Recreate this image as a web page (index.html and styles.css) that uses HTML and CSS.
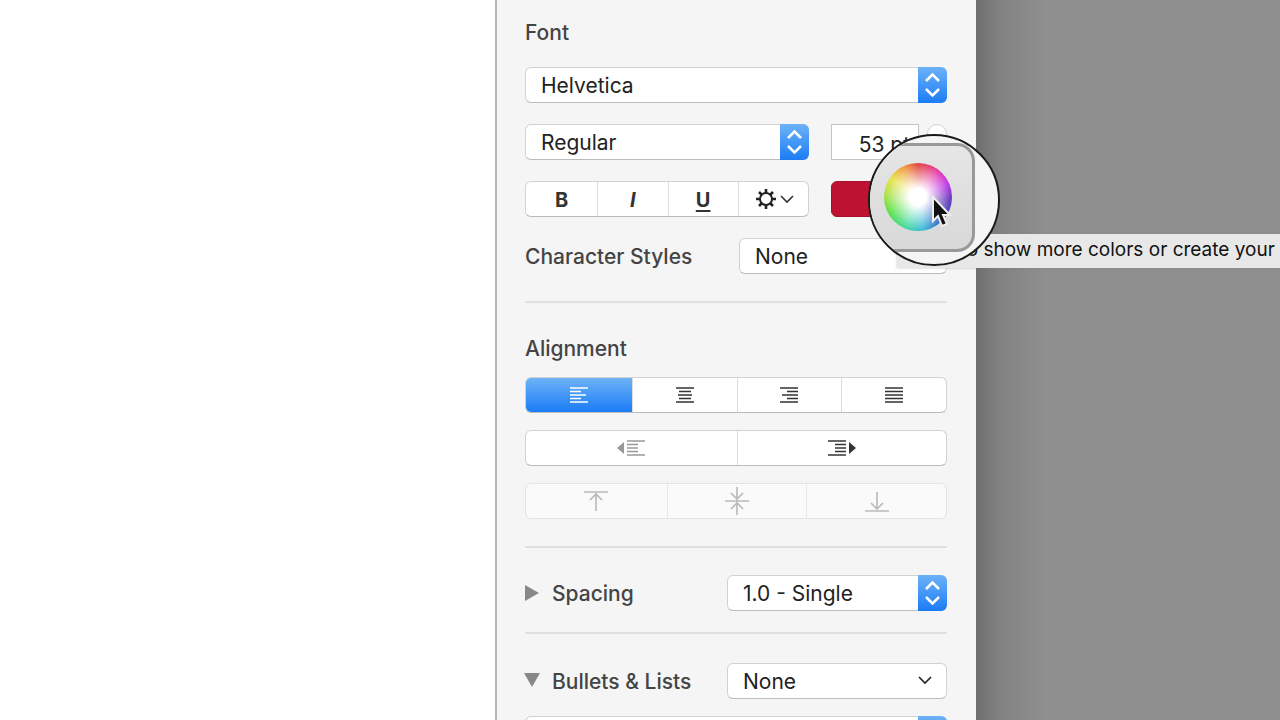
FILE: index.html
```
<!DOCTYPE html>
<html lang="en">
<head>
  <meta charset="UTF-8">
  <meta name="viewport" content="width=device-width, initial-scale=1">
  <title>Text Format</title>
  <link rel="stylesheet" href="styles.css">
</head>
<body>
  <!-- shared icons -->
  <svg class="sprite" aria-hidden="true">
    <symbol id="updown" viewBox="0 0 29 36">
      <path d="M8 14l6.500-6.500L21 14M8 22l6.500 6.500L21 22" fill="none" stroke="#fff" stroke-width="2.500"/>
    </symbol>
    <symbol id="chevron" viewBox="0 0 14 10">
      <path d="M1 2l6 6 6-6" fill="none" stroke="currentColor" stroke-width="1.600"/>
    </symbol>
  </svg>

  <div class="canvas"></div>
  <aside class="panel">
    <section class="font">
      <h2>Font</h2>
      <div class="rows">
        <div class="select">
          <select aria-label="Font family"><option>Helvetica</option></select>
          <svg class="cap"><use href="#updown"/></svg>
        </div>
        <div class="row">
          <div class="select half">
            <select aria-label="Typeface"><option>Regular</option></select>
            <svg class="cap"><use href="#updown"/></svg>
          </div>
          <input class="size" type="text" value="53 pt" aria-label="Font size">
          <button class="stepper" aria-label="Change size"></button>
        </div>
        <div class="row">
          <div class="segments half">
            <button class="bold">B</button>
            <button class="italic">I</button>
            <button class="underline">U</button>
            <button class="gear" aria-label="Advanced options">
              <svg width="20" height="20" viewBox="-10 -10 20 20">
                <g stroke="#222" stroke-width="2.600">
                  <path d="M0-10v4M0 6v4M-10 0h4M6 0h4M-7-7l3 3M4 4l3 3M-7 7l3-3M4-4l3-3"/>
                  <circle r="6" fill="none" stroke-width="2"/>
                </g>
              </svg>
              <svg width="14" height="10"><use href="#chevron"/></svg>
            </button>
          </div>
          <div class="color">
            <button class="well" aria-label="Text color"></button>
            <div class="tooltip">Click to show more colors or create your</div>
            <div class="lens">
              <div class="wheel-button"></div>
              <div class="wheel"></div>
              <svg class="cursor" viewBox="0 0 22 36">
                <path d="M2 2v24l5-5 4 10 5-2-4-9h7z" fill="#111" stroke="#eee" stroke-width="2"/>
              </svg>
            </div>
          </div>
        </div>
        <div class="row">
          <label for="charStyle">Character Styles</label>
          <div class="select menu char-style">
            <select id="charStyle"><option>None</option></select>
            <svg class="arrow"><use href="#chevron"/></svg>
          </div>
        </div>
      </div>
    </section>

    <section class="alignment">
      <h2>Alignment</h2>
      <div class="stack">
        <div class="segments">
          <button class="active" aria-label="Align left">
            <svg width="18" height="18"><path d="M0 2h18M0 5.500h11M0 9h16M0 12.500h11M0 16h18"/></svg>
          </button>
          <button aria-label="Align center">
            <svg width="18" height="18"><path d="M0 2h18M3 5.500h12M2 9h14M3 12.500h12M0 16h18"/></svg>
          </button>
          <button aria-label="Align right">
            <svg width="18" height="18"><path d="M0 2h18M7 5.500h11M2 9h16M7 12.500h11M0 16h18"/></svg>
          </button>
          <button aria-label="Justify">
            <svg width="18" height="18"><path d="M0 2h18M0 5.500h18M0 9h18M0 12.500h18M0 16h18"/></svg>
          </button>
        </div>
        <div class="segments">
          <button class="dim" aria-label="Decrease indent">
            <svg width="28" height="18"><path d="M10 2h18M10 5.500h11M10 9h11M10 12.500h11M10 16h18"/><path class="solid" d="M7 3v12L0 9z"/></svg>
          </button>
          <button aria-label="Increase indent">
            <svg width="28" height="18"><path d="M0 2h18M7 5.500h11M7 9h11M7 12.500h11M0 16h18"/><path class="solid" d="M21 3v12l7-6z"/></svg>
          </button>
        </div>
        <div class="segments disabled">
          <button disabled aria-label="Align top">
            <svg width="24" height="28"><path d="M0 5h24M12 24V6M6 13l6-6 6 6"/></svg>
          </button>
          <button disabled aria-label="Align middle">
            <svg width="24" height="28"><path d="M0 14h24M12 0v28M6 6l6 6 6-6M6 22l6-6 6 6"/></svg>
          </button>
          <button disabled aria-label="Align bottom">
            <svg width="24" height="28"><path d="M0 24h24M12 5v18M6 16l6 6 6-6"/></svg>
          </button>
        </div>
      </div>
    </section>

    <section class="spacing row">
      <svg class="disclosure" viewBox="0 0 16 16"><path d="M0 0v16l14-8z"/></svg>
      <label for="spacing">Spacing</label>
      <div class="select value">
        <select id="spacing"><option>1.0 - Single</option></select>
        <svg class="cap"><use href="#updown"/></svg>
      </div>
    </section>

    <section class="bullets">
      <div class="row">
        <svg class="disclosure" viewBox="0 0 16 16"><path d="M-1 0h16L7 14z"/></svg>
        <label for="bullets">Bullets &amp; Lists</label>
        <div class="select menu value">
          <select id="bullets"><option>None</option></select>
          <svg class="arrow"><use href="#chevron"/></svg>
        </div>
      </div>
      <div class="select">
        <select aria-label="Bullet type"></select>
        <svg class="cap"><use href="#updown"/></svg>
      </div>
    </section>
  </aside>
  <div class="desktop"></div>
</body>
</html>
```
FILE: styles.css
```
:root {
  --panel: #f5f5f5;
  --edge: #d2d2d2;
  --label: #444;
  --blue: linear-gradient(#6db2f7, #1b7cf6);
}
* { box-sizing: border-box; margin: 0; padding: 0; }
body {
  display: flex;
  height: 100vh;
  overflow: hidden;
  background: #fff;
  color: #222;
  font: 21px/24px Inter, "Liberation Sans", sans-serif;
}
button, input, select { font: inherit; color: inherit; }
.sprite { position: absolute; width: 0; height: 0; }
.canvas { flex: 495 1 0; }
.desktop {
  flex: 304 1 0;
  background: linear-gradient(to right, #6e6e6e, #828282 24px, #8f8f8f 70px);
}
.panel {
  position: relative;
  z-index: 1;
  flex: 0 0 481px;
  padding: 0 29px 0 28px;
  background: var(--panel);
  border-left: 2px solid #b6b6b6;
}
h2, label {
  color: var(--label);
  font-size: 21px;
  font-weight: 500;
  line-height: 24px;
}
label { padding-top: 2px; }
section { border-bottom: 2px solid #e0e0e0; }
.row { display: flex; align-items: center; }
.font { padding: 21px 0 27px; }
.font h2 { margin-bottom: 22px; }
.rows { display: flex; flex-direction: column; gap: 21px; }
.alignment { padding: 34px 0 27px; }
.alignment h2 { margin-bottom: 16px; }
.stack { display: flex; flex-direction: column; gap: 17px; }
.spacing { padding: 27px 0 21px; }
.bullets { padding-top: 29px; border: none; }
.bullets > .select { margin-top: 17px; }

/* pop-up menus */
.select { position: relative; height: 36px; }
.select select {
  display: block;
  width: 100%;
  height: 36px;
  padding: 2px 40px 0 15px;
  appearance: none;
  background: #fff;
  border: 1px solid var(--edge);
  border-bottom-color: #bbb;
  border-radius: 6px;
}
.cap {
  position: absolute;
  top: 0;
  right: 0;
  width: 29px;
  height: 36px;
  background: var(--blue);
  border-radius: 0 6px 6px 0;
  pointer-events: none;
}
.arrow {
  position: absolute;
  top: 12px;
  right: 15px;
  width: 14px;
  height: 10px;
  pointer-events: none;
}
.half { flex: 0 0 284px; }
.char-style { width: 208px; margin-left: auto; }
.value { width: 220px; margin-left: auto; }

.size {
  width: 88px;
  height: 36px;
  margin-left: 22px;
  padding: 4px 8px 0 0;
  text-align: right;
  background: #fff;
  border: 1px solid #c4c4c4;
}
.stepper {
  width: 20px;
  height: 36px;
  margin-left: 8px;
  background: #fff;
  border: 1px solid var(--edge);
  border-radius: 10px;
}

/* segmented buttons */
.segments {
  display: flex;
  height: 36px;
  overflow: hidden;
  background: #fff;
  border: 1px solid var(--edge);
  border-bottom-color: #bbb;
  border-radius: 6px;
}
.segments button {
  display: flex;
  flex: 1;
  align-items: center;
  justify-content: center;
  background: none;
  border: none;
  border-left: 1px solid #ddd;
  color: #333;
}
.segments button:first-child { flex-basis: 2px; border-left: none; }
.segments .active { background: var(--blue); color: #fff; }
.segments .dim { color: #999; }
.segments.disabled { background: #fafafa; border-color: #e3e3e3; }
.disabled button { color: #bbb; border-color: #e8e8e8; }
.stack svg { fill: none; stroke: currentColor; stroke-width: 1.7; }
.stack .solid { fill: currentColor; stroke: none; }
.bold, .italic, .underline { padding-top: 2px; font-size: 20px; font-weight: 700; }
.italic { font-style: italic; }
.underline { text-decoration: underline; text-underline-offset: 3px; }
.gear { gap: 4px; }
.gear svg:first-child { margin-left: 4px; }

/* colour well and the magnified wheel over it */
.color { position: relative; z-index: 2; height: 36px; margin-left: 22px; }
.well {
  display: block;
  width: 80px;
  height: 36px;
  background: #bd1230;
  border: 1px solid #a8102b;
  border-radius: 6px;
}
.tooltip {
  position: absolute;
  top: 53px;
  left: 66px;
  padding: 4px 16px 6px 14px;
  background: #e8e8e8;
  box-shadow: 0 0 2px #8888;
  color: #111;
  font-size: 19px;
  white-space: nowrap;
}
.lens {
  position: absolute;
  top: -47px;
  left: 37px;
  width: 132px;
  height: 132px;
  overflow: hidden;
  background: #f5f5f5;
  border: 2px solid #1b1b1b;
  border-radius: 50%;
}
.wheel-button {
  position: absolute;
  top: 7px;
  left: -20px;
  width: 125px;
  height: 109px;
  background: linear-gradient(#e6e6e6, #d8d8d8);
  border: 3px solid #999;
  border-radius: 18px;
}
.wheel {
  position: absolute;
  top: 27px;
  left: 14px;
  width: 68px;
  height: 68px;
  background:
    radial-gradient(closest-side, #fff 25%, #fff0 100%),
    conic-gradient(#e04038, #e838a0 35deg, #c030e8 65deg, #6030b8 95deg, #3050c0 130deg, #38b8d8 170deg, #40d8a0 200deg, #50e040 240deg, #a8e040 275deg, #e8e040 305deg, #f09838 335deg, #e04038);
  border-radius: 50%;
}
.cursor {
  position: absolute;
  top: 59px;
  left: 61px;
  width: 22px;
  height: 36px;
}

.disclosure {
  width: 16px;
  height: 16px;
  margin-right: 11px;
  overflow: visible;
  fill: #888;
}
```
